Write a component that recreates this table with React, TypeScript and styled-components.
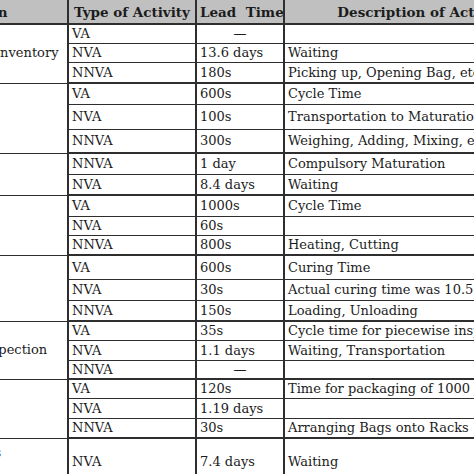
import React from "react";
import styled, { createGlobalStyle } from "styled-components";

const GlobalStyle = createGlobalStyle`
  html, body {
    margin: 0;
    padding: 0;
    background: #ffffff;
    overflow: hidden;
  }
  body {
    width: 474px;
    height: 474px;
  }
`;

const Frame = styled.div`
  width: 474px;
  height: 474px;
  overflow: hidden;
  background: #ffffff;
`;

// the table is wider than the crop: the operation column starts off-screen
const Table = styled.table`
  margin-left: -109px;
  margin-top: -2px;
  border-collapse: collapse;
  table-layout: fixed;
  width: 668px;
  font-family: "DejaVu Serif", "Liberation Serif", serif;
  font-size: 13px;
  color: #1c1c1c;
`;

const HeadCell = styled.th`
  background: #c0c0c0;
  border: 2px solid #2e2e2e;
  height: 22px;
  padding: 1px 3px 0;
  font-weight: bold;
  font-size: 13.5px;
  text-align: center;
  white-space: nowrap;
  overflow: hidden;
`;

const Row = styled.tr<{ $h: number; $groupEnd?: boolean }>`
  height: ${(p) => p.$h}px;
  & > td {
    border-bottom: ${(p) => (p.$groupEnd ? "2.5px" : "1.5px")} solid #2e2e2e;
  }
`;

const Cell = styled.td<{ $center?: boolean }>`
  border-left: 2px solid #2e2e2e;
  border-right: 2px solid #2e2e2e;
  padding: 0 3px;
  text-align: ${(p) => (p.$center ? "center" : "left")};
  vertical-align: middle;
  white-space: nowrap;
  overflow: hidden;
  line-height: 1;
`;

const OpCell = styled(Cell)`
  text-align: center;
  white-space: normal;
  line-height: 1.15;
  border-bottom: 2.5px solid #2e2e2e;
`;

type Activity = { type: string; time: string; desc: string; h: number };
type Operation = { name: React.ReactNode; key: string; rows: Activity[] };

const DASH = "\u2014";

const operations: Operation[] = [
  {
    key: "inv",
    name: "Raw Material Inventory",
    rows: [
      { type: "VA", time: DASH, desc: "", h: 19 },
      { type: "NVA", time: "13.6 days", desc: "Waiting", h: 19 },
      { type: "NNVA", time: "180s", desc: "Picking up, Opening Bag, etc", h: 21 },
    ],
  },
  {
    key: "mix",
    name: "Batch",
    rows: [
      { type: "VA", time: "600s", desc: "Cycle Time", h: 21 },
      { type: "NVA", time: "100s", desc: "Transportation to Maturation", h: 25 },
      { type: "NNVA", time: "300s", desc: "Weighing, Adding, Mixing, etc", h: 24 },
    ],
  },
  {
    key: "mat",
    name: "Rest",
    rows: [
      { type: "NNVA", time: "1 day", desc: "Compulsory Maturation", h: 21 },
      { type: "NVA", time: "8.4 days", desc: "Waiting", h: 21 },
    ],
  },
  {
    key: "press",
    name: "Press",
    rows: [
      { type: "VA", time: "1000s", desc: "Cycle Time", h: 21 },
      { type: "NVA", time: "60s", desc: "", h: 19 },
      { type: "NNVA", time: "800s", desc: "Heating, Cutting", h: 20 },
    ],
  },
  {
    key: "cure",
    name: "Cure",
    rows: [
      { type: "VA", time: "600s", desc: "Curing Time", h: 24 },
      { type: "NVA", time: "30s", desc: "Actual curing time was 10.5 min", h: 21 },
      { type: "NNVA", time: "150s", desc: "Loading, Unloading", h: 21 },
    ],
  },
  {
    key: "qi",
    name: "Outgoing Inspection",
    rows: [
      { type: "VA", time: "35s", desc: "Cycle time for piecewise inspection", h: 19 },
      { type: "NVA", time: "1.1 days", desc: "Waiting, Transportation", h: 20 },
      { type: "NNVA", time: DASH, desc: "", h: 19 },
    ],
  },
  {
    key: "pack",
    name: "Pack",
    rows: [
      { type: "VA", time: "120s", desc: "Time for packaging of 1000 units", h: 19 },
      { type: "NVA", time: "1.19 days", desc: "", h: 20 },
      { type: "NNVA", time: "30s", desc: "Arranging Bags onto Racks", h: 20 },
    ],
  },
  {
    key: "fg",
    name: (
      <>
        Stores
        <br />
        FG
      </>
    ),
    rows: [{ type: "NVA", time: "7.4 days", desc: "Waiting", h: 46 }],
  },
];

export default function App() {
  return (
    <Frame>
      <GlobalStyle />
      <Table>
        <colgroup>
          <col style={{ width: 176 }} />
          <col style={{ width: 128 }} />
          <col style={{ width: 88 }} />
          <col style={{ width: 276 }} />
        </colgroup>
        <thead>
          <tr>
            <HeadCell>Station</HeadCell>
            <HeadCell>Type of Activity</HeadCell>
            <HeadCell>Lead&nbsp; Time</HeadCell>
            <HeadCell>Description of Activity</HeadCell>
          </tr>
        </thead>
        <tbody>
          {operations.map((op) =>
            op.rows.map((r, i) => (
              <Row key={op.key + i} $h={r.h} $groupEnd={i === op.rows.length - 1}>
                {i === 0 && <OpCell rowSpan={op.rows.length}>{op.name}</OpCell>}
                <Cell>{r.type}</Cell>
                <Cell $center={r.time === DASH}>{r.time}</Cell>
                <Cell>{r.desc}</Cell>
              </Row>
            ))
          )}
        </tbody>
      </Table>
    </Frame>
  );
}
